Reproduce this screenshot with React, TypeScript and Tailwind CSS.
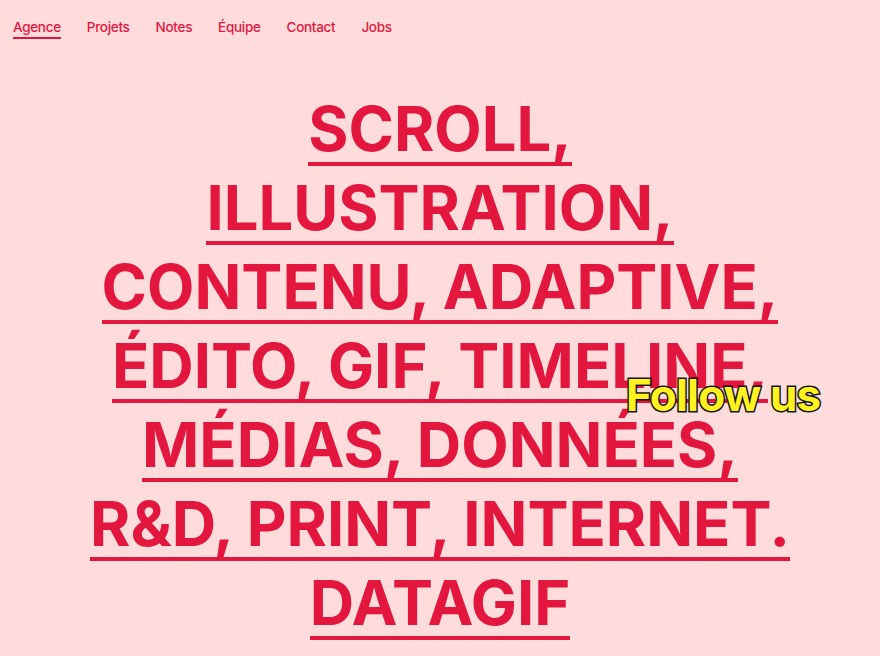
const navItems = ["Agence", "Projets", "Notes", "Équipe", "Contact", "Jobs"]

const lines = [
  "SCROLL,",
  "ILLUSTRATION,",
  "CONTENU, ADAPTIVE,",
  "ÉDITO, GIF, TIMELINE,",
  "MÉDIAS, DONNÉES,",
  "R&D, PRINT, INTERNET.",
  "DATAGIF",
]

export default function App() {
  return (
    <div className="relative min-h-[656px] bg-[#ffdcdc] text-[#e3173e] overflow-hidden" style={{ fontFamily: "Inter, 'Noto Sans', sans-serif" }}>
      <nav className="flex gap-[26px] px-[13px] pt-[17px] text-[13.5px] font-medium leading-5 tracking-[-0.3px]">
        {navItems.map((item, i) => (
          <a
            key={item}
            href="#"
            className={i === 0 ? "border-b-2 border-[#e3173e]" : ""}
          >
            {item}
          </a>
        ))}
      </nav>

      <h1 className="mt-[50px] flex flex-col items-center text-[61.5px] font-bold leading-[79px]">
        {lines.map((line) => (
          <span key={line} className="block h-[79px] whitespace-nowrap">
            <span className="inline-block border-b-4 border-[#e3173e] leading-[66px]">{line}</span>
          </span>
        ))}
      </h1>

      <div
        className="absolute left-[626px] top-[373px] text-[44px] font-bold leading-none text-[#fff21e] tracking-[-0.8px]"
        style={{ WebkitTextStroke: "3px #111", paintOrder: "stroke fill" }}
      >
        Follow us
      </div>
    </div>
  )
}
